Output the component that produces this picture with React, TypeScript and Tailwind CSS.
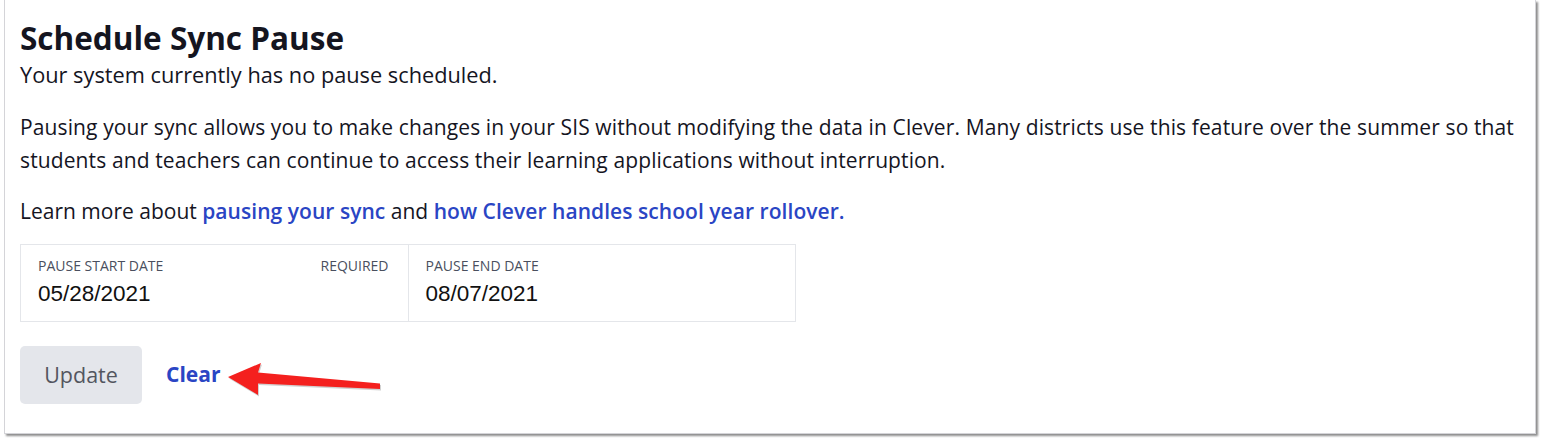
import React from "react";

const font = { fontFamily: '"Open Sans", "Noto Sans", sans-serif' };

function ArrowPointer() {
  return (
    <svg
      className="absolute left-[220px] top-[358px] h-[44px] w-[166px]"
      viewBox="220 358 166 44"
      fill="none"
    >
      <polygon
        points="228,377 261,363 258,372.5 380,383.5 380,389 258,383.5 258,395"
        fill="#000"
        opacity="0.18"
        transform="translate(1,1.5)"
      />
      <polygon points="228,377 261,363 258,372.5 380,383.5 380,389 258,383.5 258,395" fill="#f4201e" />
    </svg>
  );
}

function DateField({ label, value, required }: { label: string; value: string; required?: boolean }) {
  return (
    <div className="flex flex-1 flex-col pl-[17px] pr-[19px] pt-[12px]">
      <div className="flex items-center justify-between text-[14px] uppercase leading-[18px] text-[#4a4f5e]">
        <span>{label}</span>
        {required && <span>Required</span>}
      </div>
      <div
        className="mt-[5px] text-[22.5px] leading-[28px] text-[#111]"
        style={{ fontFamily: '"Liberation Sans", Arial, sans-serif' }}
      >
        {value}
      </div>
    </div>
  );
}

export default function App() {
  return (
    <div className="relative h-[442px] w-[1545px] overflow-hidden bg-white" style={font}>
      <div className="ml-[4px] h-[434px] w-[1532px] border-x border-b border-[#d4d4d8] bg-white pl-[15px] pr-[10px] pt-[20px] shadow-[2px_2px_2px_rgba(0,0,0,0.45)]">
        <h1 className="text-[31.5px] font-bold leading-[36px] text-[#15151f]">Schedule Sync Pause</h1>
        <p className="mt-[4px] text-[21.75px] leading-[30px] text-[#15151f]">
          Your system currently has no pause scheduled.
        </p>

        <p className="mt-[21px] text-[21px] leading-[33px] tracking-[0.12px] text-[#15151f]">
          Pausing your sync allows you to make changes in your SIS without modifying the data in Clever. Many
          districts use this feature over the summer so that students and teachers can continue to access their
          learning applications without interruption.
        </p>

        <p className="mt-[18px] text-[21px] leading-[33px] text-[#15151f]">
          Learn more about{" "}
          <a className="font-semibold tracking-[0.05px] text-[#2a45c4]">pausing your sync</a> and{" "}
          <a className="font-semibold tracking-[0.05px] text-[#2a45c4]">how Clever handles school year rollover.</a>
        </p>

        <div className="mt-[16px] flex h-[78px] w-[776px] border border-[#e4e6ea]">
          <DateField label="Pause start date" value="05/28/2021" required />
          <div className="w-px bg-[#e4e6ea]" />
          <DateField label="Pause end date" value="08/07/2021" />
        </div>

        <div className="mt-[24px] flex items-center gap-[24px]">
          <button className="h-[58px] w-[122px] rounded-[5px] bg-[#e4e6eb] text-[21.5px] text-[#53565f]">Update</button>
          <a className="text-[21px] font-bold text-[#2a45c4]">Clear</a>
        </div>
      </div>
      <ArrowPointer />
    </div>
  );
}
